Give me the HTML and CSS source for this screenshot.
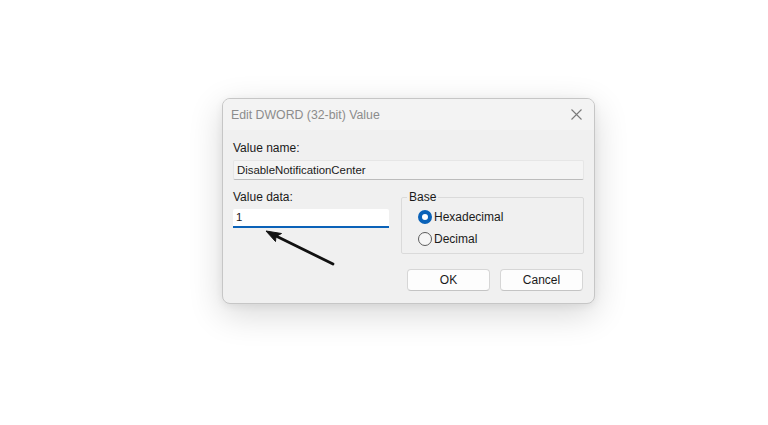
FILE: index.html
```html
<!DOCTYPE html>
<html lang="en">
<head>
<meta charset="utf-8">
<title>Edit DWORD (32-bit) Value</title>
<link rel="stylesheet" href="styles.css">
</head>
<body>
<div class="page">
  <div class="dialog">
    <div class="titlebar">
      <span class="title">Edit DWORD (32-bit) Value</span>
      <svg class="close" width="11" height="11" viewBox="0 0 11 11" aria-hidden="true">
        <path d="M0.5 0.5 L10.5 10.5 M10.5 0.5 L0.5 10.5" stroke="#7a7a7a" stroke-width="1.1" fill="none"/>
      </svg>
    </div>
    <div class="body">
      <div class="label">Value name:</div>
      <div class="field readonly">DisableNotificationCenter</div>
      <div class="row">
        <div class="data-col">
          <div class="label">Value data:</div>
          <div class="field edit">1</div>
        </div>
        <fieldset class="group">
          <legend>Base</legend>
          <div class="radios">
            <div class="radio-row"><span class="radio on"></span><span>Hexadecimal</span></div>
            <div class="radio-row"><span class="radio"></span><span>Decimal</span></div>
          </div>
        </fieldset>
      </div>
      <div class="buttons">
        <div class="btn">OK</div>
        <div class="btn">Cancel</div>
      </div>
      <svg class="arrow" width="90" height="50" viewBox="0 0 90 50" aria-hidden="true">
        <line x1="78" y1="42" x2="21" y2="14" stroke="#111" stroke-width="2.8" stroke-linecap="round"/>
        <polygon points="11,9 26.5,11.5 21,14.5 20.5,19.5" fill="#111" stroke="#111" stroke-width="1" stroke-linejoin="round"/>
      </svg>
    </div>
  </div>
</div>
</body>
</html>
```

FILE: styles.css
```css
html, body {
  margin: 0;
  padding: 0;
  background: #ffffff;
}
body {
  width: 768px;
  height: 425px;
  overflow: hidden;
  font-family: "Liberation Sans", Arial, sans-serif;
  font-size: 12px;
  color: #1a1a1a;
}
.page {
  padding: 98px 0 0 222px;
}
.dialog {
  position: relative;
  box-sizing: border-box;
  width: 373px;
  height: 206px;
  border: 1px solid #c6c6c6;
  border-radius: 8px;
  background: #f0f0f0;
  box-shadow: 0 10px 34px rgba(0, 0, 0, 0.16), 0 2px 8px rgba(0, 0, 0, 0.06);
  overflow: visible;
}
.titlebar {
  height: 31px;
  display: flex;
  align-items: center;
  justify-content: space-between;
  padding: 0 12px 0 8px;
  background: #f3f3f3;
  border-radius: 7px 7px 0 0;
}
.title {
  font-size: 12.3px;
  color: #8c8c8c;
}
.close {
  display: block;
  margin-top: -1px;
}
.body {
  padding: 10px 10px 12px 10px;
}
.label {
  line-height: 16px;
  height: 16px;
  margin-bottom: 4px;
}
.field {
  box-sizing: border-box;
  height: 20px;
  padding: 0 3px;
  font-size: 11.4px;
  line-height: 18px;
}
.readonly {
  background: #f4f4f4;
  border: 1px solid #e6e6e6;
  border-bottom-color: #bcbcbc;
  border-radius: 2px;
  margin-bottom: 9px;
}
.edit {
  height: 19px;
  background: #ffffff;
  border-bottom: 2px solid #0a62b8;
  border-radius: 2px 2px 0 0;
  line-height: 17px;
  padding-left: 3px;
}
.row {
  display: flex;
  gap: 12px;
  height: 65px;
}
.data-col {
  width: 156px;
}
.group {
  box-sizing: border-box;
  margin: 0;
  padding: 0;
  width: 183px;
  height: 65px;
  border: 1px solid #dadada;
  border-radius: 2px;
  min-inline-size: 0;
}
.group legend {
  margin-left: 5px;
  padding: 0 2px;
  line-height: 16px;
}
.radios {
  padding: 1px 0 3px 16px;
}
.radio-row {
  height: 22px;
  display: flex;
  align-items: center;
  gap: 2px;
  font-size: 12px;
}
.radio {
  box-sizing: border-box;
  width: 14px;
  height: 14px;
  border-radius: 50%;
  border: 1px solid #5c5c5c;
  background: #f6f6f6;
  flex: none;
}
.radio.on {
  border: 4px solid #0a62b8;
  background: #ffffff;
}
.buttons {
  display: flex;
  justify-content: flex-end;
  gap: 10px;
  margin-top: 15px;
  padding-right: 1px;
}
.btn {
  box-sizing: border-box;
  width: 83px;
  height: 22px;
  line-height: 20px;
  text-align: center;
  background: #fdfdfd;
  border: 1px solid #d6d6d6;
  border-bottom-color: #c4c4c4;
  border-radius: 4px;
  font-size: 12px;
}
.arrow {
  position: absolute;
  left: 32px;
  top: 123px;
}
```
